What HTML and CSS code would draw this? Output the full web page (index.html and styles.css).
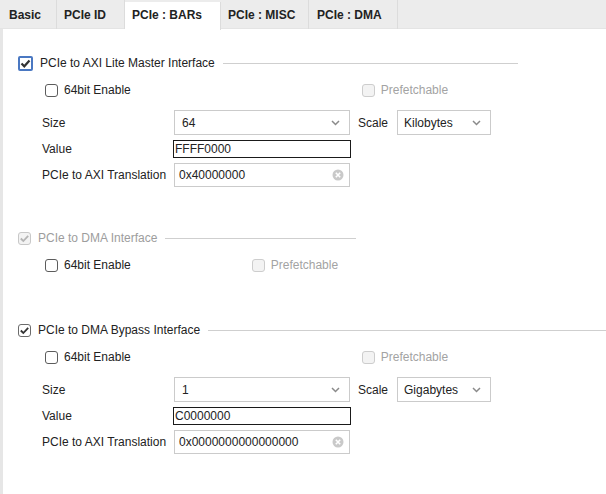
FILE: index.html
```html
<!DOCTYPE html>
<html>
<head>
<meta charset="utf-8">
<link rel="stylesheet" href="styles.css">
</head>
<body>
<div class="tabs">
  <div class="tab">Basic</div>
  <div class="tab">PCIe ID</div>
  <div class="tab active">PCIe : BARs</div>
  <div class="tab">PCIe : MISC</div>
  <div class="tab">PCIe : DMA</div>
</div>
<div class="panel">
  <section class="group g1">
    <div class="ghead">
      <span class="cb checked focus"><svg viewBox="0 0 11 11" width="11" height="11"><path d="M1.5 5.5 L4.3 8.3 L9.5 2.5" fill="none" stroke="#333" stroke-width="2.2"/></svg></span>
      <span class="gtitle">PCIe to AXI Lite Master Interface</span>
      <span class="rule"></span>
    </div>
    <div class="opts">
      <label class="opt"><span class="cb"></span>64bit Enable</label>
      <label class="opt dis pre1"><span class="cb dis"></span>Prefetchable</label>
    </div>
    <div class="form">
      <div class="row r-size">
        <span class="lbl">Size</span>
        <div class="combo wide"><span>64</span><svg class="chev" viewBox="0 0 9 6" width="9" height="6"><path d="M1 1 L4.5 4.5 L8 1" fill="none" stroke="#8a8a8a" stroke-width="1.5"/></svg></div>
        <span class="slbl">Scale</span>
        <div class="combo narrow"><span>Kilobytes</span><svg class="chev" viewBox="0 0 9 6" width="9" height="6"><path d="M1 1 L4.5 4.5 L8 1" fill="none" stroke="#8a8a8a" stroke-width="1.5"/></svg></div>
      </div>
      <div class="row r-val">
        <span class="lbl">Value</span>
        <div class="valbox">FFFF0000</div>
      </div>
      <div class="row r-tr">
        <span class="lbl">PCIe to AXI Translation</span>
        <div class="trbox"><span>0x40000000</span><span class="clr"><svg viewBox="0 0 12 12" width="12" height="12"><circle cx="6" cy="6" r="5.5" fill="#c9c9c9"/><path d="M3.8 3.8 L8.2 8.2 M8.2 3.8 L3.8 8.2" stroke="#fff" stroke-width="1.6"/></svg></span></div>
      </div>
    </div>
  </section>

  <section class="group g2">
    <div class="ghead">
      <span class="cb checked dis"><svg viewBox="0 0 11 11" width="11" height="11"><path d="M1.8 5.5 L4.3 8 L9.2 2.8" fill="none" stroke="#b4b4b4" stroke-width="1.8"/></svg></span>
      <span class="gtitle dist">PCIe to DMA Interface</span>
      <span class="rule"></span>
    </div>
    <div class="opts">
      <label class="opt"><span class="cb"></span>64bit Enable</label>
      <label class="opt dis pre2"><span class="cb dis"></span>Prefetchable</label>
    </div>
  </section>

  <section class="group g3">
    <div class="ghead">
      <span class="cb checked"><svg viewBox="0 0 11 11" width="11" height="11"><path d="M1.8 5.5 L4.3 8 L9.2 2.8" fill="none" stroke="#333" stroke-width="1.8"/></svg></span>
      <span class="gtitle">PCIe to DMA Bypass Interface</span>
      <span class="rule"></span>
    </div>
    <div class="opts">
      <label class="opt"><span class="cb"></span>64bit Enable</label>
      <label class="opt dis pre1"><span class="cb dis"></span>Prefetchable</label>
    </div>
    <div class="form">
      <div class="row r-size">
        <span class="lbl">Size</span>
        <div class="combo wide"><span>1</span><svg class="chev" viewBox="0 0 9 6" width="9" height="6"><path d="M1 1 L4.5 4.5 L8 1" fill="none" stroke="#8a8a8a" stroke-width="1.5"/></svg></div>
        <span class="slbl">Scale</span>
        <div class="combo narrow"><span>Gigabytes</span><svg class="chev" viewBox="0 0 9 6" width="9" height="6"><path d="M1 1 L4.5 4.5 L8 1" fill="none" stroke="#8a8a8a" stroke-width="1.5"/></svg></div>
      </div>
      <div class="row r-val">
        <span class="lbl">Value</span>
        <div class="valbox">C0000000</div>
      </div>
      <div class="row r-tr">
        <span class="lbl">PCIe to AXI Translation</span>
        <div class="trbox"><span>0x0000000000000000</span><span class="clr"><svg viewBox="0 0 12 12" width="12" height="12"><circle cx="6" cy="6" r="5.5" fill="#c9c9c9"/><path d="M3.8 3.8 L8.2 8.2 M8.2 3.8 L3.8 8.2" stroke="#fff" stroke-width="1.6"/></svg></span></div>
      </div>
    </div>
  </section>
</div>
</body>
</html>
```

FILE: styles.css
```css
* { box-sizing: border-box; }
html, body {
  margin: 0;
  padding: 0;
  background: #ffffff;
}
body {
  width: 606px;
  height: 494px;
  overflow: hidden;
  font-family: "Liberation Sans", Arial, sans-serif;
  font-size: 12px;
  color: #222222;
}
.tabs {
  display: flex;
  height: 29px;
  background: #ececec;
  border-bottom: 1px solid #e4e4e4;
}
.tab {
  display: flex;
  align-items: center;
  padding: 0 8px 0 9px;
  height: 29px;
  font-weight: bold;
  color: #222;
  border-right: 1px solid #dcdcdc;
}
.tab:nth-child(1) { width: 57px; }
.tab:nth-child(2) { width: 68px; padding-left: 7px; }
.tab:nth-child(3) { width: 96px; padding-left: 7px; }
.tab:nth-child(4) { width: 88px; padding-left: 7px; }
.tab:nth-child(5) { width: 89px; padding-left: 8px; }
.tab.active {
  background: #ffffff;
  margin-top: 2px;
  height: 28px;
  padding-bottom: 2px;
}
.panel {
  height: 465px;
  border-left: 3px solid #e6e6e6;
  padding-top: 26px;
  padding-left: 15px;
}
.group { display: flex; flex-direction: column; }
.g1 { width: 500px; }
.g2 { width: 338px; margin-top: 43px; }
.g3 { width: 590px; margin-top: 49px; }
.ghead {
  display: flex;
  align-items: center;
  height: 16px;
}
.gtitle { margin-left: 7px; white-space: nowrap; }
.dist { color: #9d9d9d; }
.rule {
  flex: 1;
  height: 1px;
  background: #cfcfcf;
  margin-left: 8px;
}
.cb {
  display: inline-flex;
  align-items: center;
  justify-content: center;
  width: 13px;
  height: 13px;
  border: 1px solid #5c5c5c;
  border-radius: 3px;
  background: #fff;
  flex: none;
}
.cb.dis { border-color: #cdcdcd; background: #f3f3f3; }
.cb.checked { border-color: #6b6b6b; }
.cb.checked.dis { border-color: #c8c8c8; background: #f3f3f3; }
.cb.focus {
  width: 15px;
  height: 15px;
  border: 2px solid #4a78c2;
  border-radius: 2px;
}
.opts {
  display: flex;
  align-items: center;
  height: 16px;
  margin-top: 11px;
  padding-left: 27px;
}
.opt { display: flex; align-items: center; gap: 6px; }
.opt.dis { color: #a3a3a3; }
.pre1 { margin-left: 231px; }
.pre2 { margin-left: 121px; }
.form {
  display: flex;
  flex-direction: column;
  gap: 5px;
  margin-top: 12px;
  padding-left: 24px;
}
.row { display: flex; align-items: center; }
.lbl { width: 132px; flex: none; white-space: nowrap; }
.combo {
  display: flex;
  align-items: center;
  justify-content: space-between;
  height: 25px;
  border: 1px solid #cbcbcb;
  background: #fff;
  padding: 0 9px 0 7px;
}
.combo.wide { width: 176px; }
.combo.narrow { width: 94px; padding-left: 6px; }
.slbl { margin: 0 9px 0 8px; }
.valbox {
  width: 178px;
  height: 18px;
  margin-left: -1px;
  border: 1px solid #1a1a1a;
  padding-left: 1px;
  line-height: 16px;
}
.trbox {
  display: flex;
  align-items: center;
  justify-content: space-between;
  width: 176px;
  height: 24px;
  border: 1px solid #cbcbcb;
  padding: 0 5px 0 4px;
}
.clr { display: flex; }
```
